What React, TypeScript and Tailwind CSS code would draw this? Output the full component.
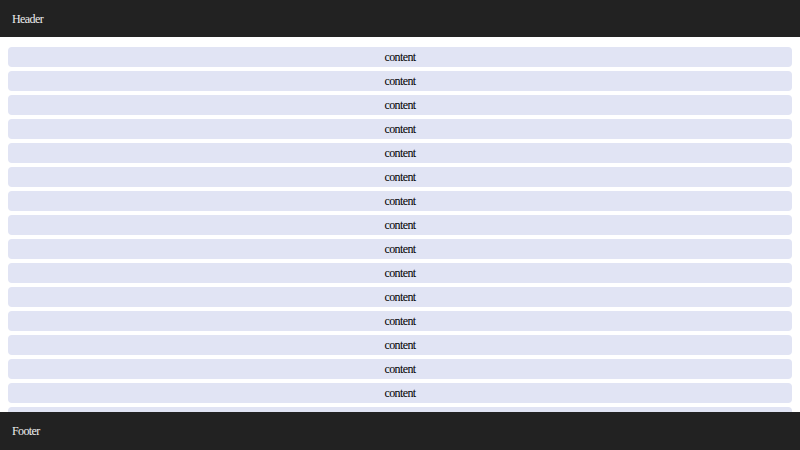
const rows = Array.from({ length: 20 }, (_, i) => i)

export default function App() {
  return (
    <div className="flex h-screen flex-col bg-white font-['Liberation_Serif',serif] text-[12px] tracking-[-0.6px]">
      <header className="flex h-[37px] shrink-0 items-center bg-[#222222] px-3 text-[#eeeeee]">Header</header>
      <main className="flex min-h-0 flex-1 flex-col gap-1 overflow-hidden px-2 pt-[10px]">
        {rows.map((i) => (
          <div
            key={i}
            className="flex h-5 shrink-0 items-center justify-center rounded bg-[#e1e4f4] text-black"
          >
            content
          </div>
        ))}
      </main>
      <footer className="flex h-[38px] shrink-0 items-center bg-[#222222] px-3 text-[#eeeeee]">Footer</footer>
    </div>
  )
}
